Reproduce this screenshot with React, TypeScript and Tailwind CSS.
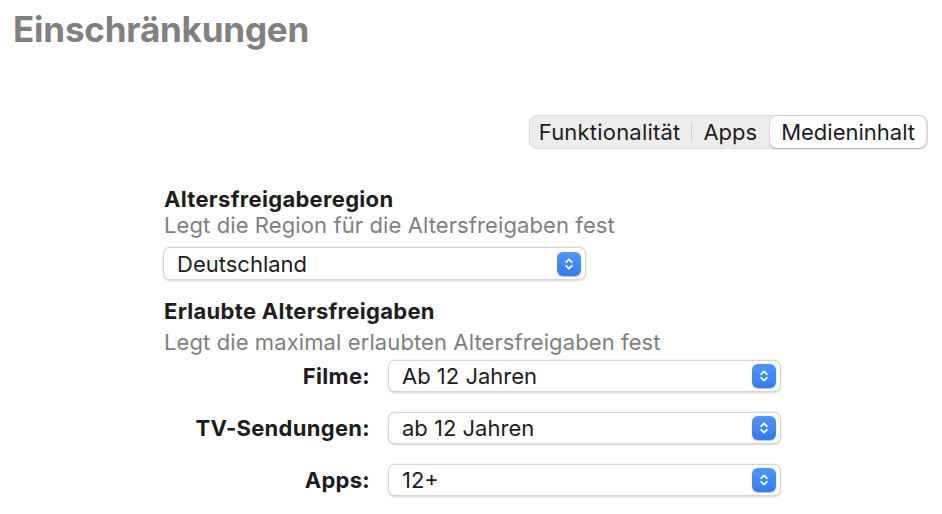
import React from "react";

function Stepper() {
  return (
    <div className="flex h-[24px] w-[24px] items-center justify-center rounded-[6px] bg-gradient-to-b from-[#4f95fa] to-[#2f7cf4] shadow-[0_0.5px_1px_rgba(0,0,0,0.25)]">
      <svg width="12" height="16" viewBox="0 0 12 16" fill="none">
        <path d="M3.2 6.2 L6 3.4 L8.8 6.2" stroke="white" strokeWidth="1.9" strokeLinecap="round" strokeLinejoin="round" />
        <path d="M3.2 9.8 L6 12.6 L8.8 9.8" stroke="white" strokeWidth="1.9" strokeLinecap="round" strokeLinejoin="round" />
      </svg>
    </div>
  );
}

function Select({ value, className }: { value: string; className: string }) {
  return (
    <div
      className={`flex h-[32px] items-center justify-between rounded-[7px] border-[0.5px] border-[#d4d4d4] bg-white pl-[13px] pr-[4px] shadow-[0_0.5px_2px_rgba(0,0,0,0.18)] ${className}`}
    >
      <span className="text-[22px] leading-[26px] text-[#1d1d1d]">{value}</span>
      <Stepper />
    </div>
  );
}

function Row({ label, value }: { label: string; value: string }) {
  return (
    <div className="flex items-center">
      <div className="w-[224px] pr-[18px] text-right text-[22px] font-bold leading-[26px] tracking-[0.3px] text-[#1d1d1d]">
        {label}
      </div>
      <Select value={value} className="w-[393px]" />
    </div>
  );
}

export default function App() {
  return (
    <div
      className="h-[514px] w-[942px] overflow-hidden bg-white"
      style={{ fontFamily: "Inter, 'Noto Sans', sans-serif" }}
    >
      <div className="pl-[13px] pt-[7px] text-[35px] font-bold leading-[44px] tracking-[-0.2px] text-[#808080]">
        Einschränkungen
      </div>

      <div className="mt-[64px] flex justify-end pr-[14px]">
        <div className="flex h-[34px] items-center rounded-[8px] border-[0.5px] border-[#dcdcdc] bg-[#ededed] pl-[9px] pr-[1px] text-[22px] leading-[26px] text-[#1d1d1d]">
          <span className="tracking-[0.2px]">Funktionalität</span>
          <span className="mx-[11px] h-[18px] w-px bg-[#cfcfcf]" />
          <span>Apps</span>
          <span className="ml-[13px] flex h-[32px] items-center rounded-[7px] bg-white px-[11px] shadow-[0_0.5px_2px_rgba(0,0,0,0.25)]">
            Medieninhalt
          </span>
        </div>
      </div>

      <div className="ml-[164px] mt-[37px]">
        <div className="text-[22px] font-bold leading-[26px] tracking-[0.3px] text-[#1d1d1d]">Altersfreigaberegion</div>
        <div className="text-[22px] leading-[26px] tracking-[0.1px] text-[#808080]">Legt die Region für die Altersfreigaben fest</div>
        <Select value="Deutschland" className="-ml-[1px] mt-[9px] h-[33px] w-[423px]" />

        <div className="mt-[18px] text-[22px] font-bold leading-[26px] tracking-[0.3px] text-[#1d1d1d]">Erlaubte Altersfreigaben</div>
        <div className="mt-[5px] text-[22px] leading-[26px] tracking-[0.1px] text-[#808080]">Legt die maximal erlaubten Altersfreigaben fest</div>

        <div className="mt-[5px] flex flex-col gap-[20px]">
          <Row label="Filme:" value="Ab 12 Jahren" />
          <Row label="TV-Sendungen:" value="ab 12 Jahren" />
          <Row label="Apps:" value="12+" />
        </div>
      </div>
    </div>
  );
}
